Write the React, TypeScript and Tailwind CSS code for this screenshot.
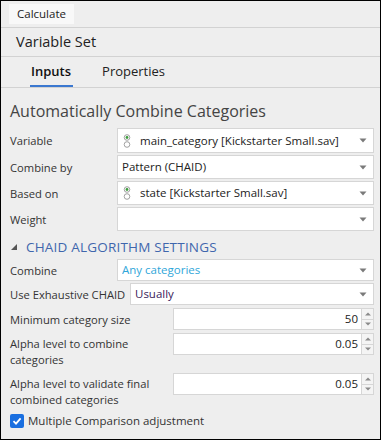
import React from 'react';

const font = { fontFamily: '"Open Sans", "Noto Sans", sans-serif' };

function Caret() {
  return (
    <svg width="8" height="5" viewBox="0 0 8 5" className="shrink-0">
      <path d="M0.5 0.5 L7.5 0.5 L4 4.5 Z" fill="#7a7a7a" />
    </svg>
  );
}

function Radios() {
  return (
    <svg width="8" height="14" viewBox="0 0 8 14" className="shrink-0 ml-[1px] mr-[9px]">
      <circle cx="4" cy="3.5" r="2.8" fill="#fff" stroke="#8a8a8a" strokeWidth="0.8" />
      <circle cx="4" cy="3.5" r="1.4" fill="#3c9c3c" />
      <circle cx="4" cy="10.5" r="2.8" fill="#fff" stroke="#8a8a8a" strokeWidth="0.8" />
    </svg>
  );
}

function Select({ children, radios, className = 'h-[23px]', textClass = 'text-[#222]' }: { children?: React.ReactNode; radios?: boolean; className?: string; textClass?: string }) {
  return (
    <div className={`flex-1 bg-white border border-[#d6d6d6] flex items-center pl-[4px] pr-[6px] ${className}`}>
      {radios && <Radios />}
      <span className={`flex-1 text-[11.5px] truncate ${textClass}`}>{children}</span>
      <Caret />
    </div>
  );
}

function Spin({ value }: { value: string }) {
  return (
    <div className="flex-1 flex h-[22px]">
      <div className="flex-1 bg-white border border-[#d6d6d6] flex items-center justify-end pr-[3px] text-[11.5px] text-[#222]">{value}</div>
      <div className="w-[12px] flex flex-col">
        <div className="flex-1 border border-l-0 border-[#d6d6d6] bg-[#f4f4f4] flex items-center justify-center">
          <svg width="6" height="4" viewBox="0 0 6 4"><path d="M0 3.5 L6 3.5 L3 0.5 Z" fill="#8a8a8a" /></svg>
        </div>
        <div className="flex-1 border border-l-0 border-t-0 border-[#d6d6d6] bg-[#f4f4f4] flex items-center justify-center">
          <svg width="6" height="4" viewBox="0 0 6 4"><path d="M0 0.5 L6 0.5 L3 3.5 Z" fill="#8a8a8a" /></svg>
        </div>
      </div>
    </div>
  );
}

function Row({ label, labelW, children, className = '' }: { label: React.ReactNode; labelW: string; children: React.ReactNode; className?: string }) {
  return (
    <div className={`flex items-center ${className}`}>
      <div className={`${labelW} shrink-0 text-[11.2px] leading-[15px] text-[#333]`}>{label}</div>
      {children}
    </div>
  );
}

function TallRow({ label, children, className = '' }: { label: React.ReactNode; children: React.ReactNode; className?: string }) {
  return (
    <div className={`flex items-start ${className}`}>
      <div className="w-[163px] shrink-0 pt-[3px] text-[11.2px] leading-[16px] text-[#333]">{label}</div>
      {children}
    </div>
  );
}

export default function App() {
  return (
    <div className="w-[381px] h-[440px] bg-[#eeeeee] border border-black flex flex-col overflow-hidden" style={font}>
      <div className="h-[27px] border-b border-[#d2d2d2] flex items-center pl-[8px]">
        <div className="bg-[#f8f8f8] h-[20px] px-[8px] flex items-center text-[11.5px] text-[#222]">Calculate</div>
      </div>
      <div className="h-[29px] border-b border-[#d2d2d2] flex items-center pl-[15px] text-[14.5px] text-[#222]">Variable Set</div>
      <div className="h-[31px] border-b border-[#d2d2d2] flex items-end pl-[28px] gap-[29px]">
        <div className="flex flex-col items-center">
          <span className="text-[13px] font-semibold text-[#111] px-[2px] pb-[4px]">Inputs</span>
          <div className="h-[2px] w-[43px] bg-[#3b78d0]" />
        </div>
        <span className="text-[13px] text-[#222] pb-[6px]">Properties</span>
      </div>
      <div className="flex-1 flex flex-col pl-[9px] pr-[6px]">
        <div className="mt-[13px] text-[16px] leading-[20px] text-[#444]">Automatically Combine Categories</div>
        <div className="mt-[7px] flex flex-col gap-[2px]">
          <Row label="Variable" labelW="w-[107px]">
            <Select radios className="h-[25px]">main_category [Kickstarter Small.sav]</Select>
          </Row>
          <Row label="Combine by" labelW="w-[107px]">
            <Select className="h-[24px]">Pattern (CHAID)</Select>
          </Row>
          <Row label="Based on" labelW="w-[107px]">
            <Select radios className="h-[24px]">state [Kickstarter Small.sav]</Select>
          </Row>
          <Row label="Weight" labelW="w-[107px]">
            <Select className="h-[24px]" />
          </Row>
        </div>
        <div className="mt-[5px] flex items-center h-[22px]">
          <svg width="8" height="8" viewBox="0 0 8 8" className="mr-[8px]"><path d="M7 1 L7 7 L1 7 Z" fill="#555" /></svg>
          <span className="text-[13.5px] text-[#3f66ad] tracking-[0.2px]">CHAID ALGORITHM SETTINGS</span>
        </div>
        <div className="mt-[1px] flex flex-col">
          <Row label="Combine" labelW="w-[107px]">
            <Select className="h-[22px]" textClass="text-[#2fa6d9]">Any categories</Select>
          </Row>
          <Row label="Use Exhaustive CHAID" labelW="w-[120px]" className="mt-[2px]">
            <Select className="h-[22px]" textClass="text-[#3a1a5a]">Usually</Select>
          </Row>
          <Row label="Minimum category size" labelW="w-[163px]" className="mt-[3px]">
            <Spin value="50" />
          </Row>
          <TallRow label={<>Alpha level to combine<br />categories</>} className="mt-[3px]">
            <Spin value="0.05" />
          </TallRow>
          <TallRow label={<>Alpha level to validate final<br />combined categories</>} className="mt-[5px]">
            <Spin value="0.05" />
          </TallRow>
        </div>
        <div className="mt-[4px] flex items-center">
          <div className="w-[14px] h-[14px] rounded-[2px] bg-[#1a6fe0] flex items-center justify-center mr-[4px]">
            <svg width="10" height="10" viewBox="0 0 10 10"><path d="M1.5 5.2 L4 7.6 L8.6 2.4" stroke="#fff" strokeWidth="1.8" fill="none" /></svg>
          </div>
          <span className="text-[11.5px] text-[#333]">Multiple Comparison adjustment</span>
        </div>
      </div>
    </div>
  );
}
